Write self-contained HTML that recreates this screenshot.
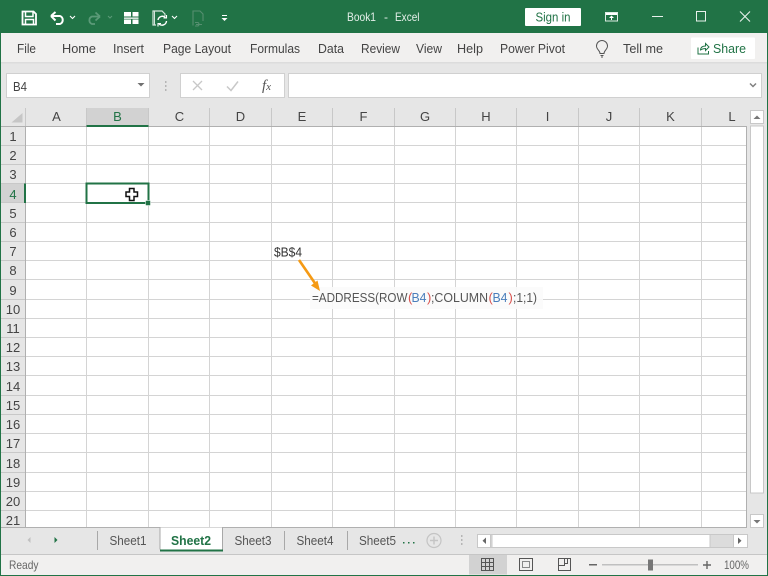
<!DOCTYPE html>
<html><head><meta charset="utf-8"><style>
html,body{margin:0;padding:0;width:768px;height:576px;overflow:hidden;background:#e6e6e6}
svg{display:block;position:absolute;left:0;top:0;filter:blur(0.35px)}
text{font-family:"Liberation Sans",sans-serif;font-size:12.5px;fill:#444}
.h text{font-size:13px}
</style></head><body>
<svg width="768" height="576" viewBox="0 0 768 576" xmlns="http://www.w3.org/2000/svg">
<rect width="768" height="576" fill="#e6e6e6"/>
<!-- title bar -->
<rect width="768" height="33" fill="#217346"/>
<!-- QAT -->
<g fill="none" stroke="#fff" stroke-width="1.800">
<path d="M22.500 11.500h11l2.500 2.500v10.500h-13.500z"/><path d="M25.500 12v4.500h7.500v-4.500M25.500 24.500v-5h8v5" stroke-width="1.500"/>
<path d="M52 16h8a4.300 4.300 0 0 1 0 8h-4" stroke-width="2"/><path d="M51 16l4.500-4M51 16l4.500 4.500" stroke-width="2"/>
<path d="M70 16l2.500 2.500 2.500-2.500" stroke-width="1.100"/>
<path d="M172 16l2.500 2.500 2.500-2.500" stroke-width="1.100"/>
</g>
<g fill="none" stroke="#5b9a78" stroke-width="1.800"><path d="M99 16.500h-7a4 4 0 0 0 0 7.500h3"/><path d="M100 16.500l-4.500-4M100 16.500l-4.500 4"/><path d="M108 16l2 2 2-2" stroke-width="1"/></g>
<g fill="#fff"><rect x="124" y="12" width="7" height="4.500"/><rect x="132.500" y="12" width="6" height="4.500"/><rect x="124" y="17.500" width="14.500" height="1.300"/><rect x="124" y="19.500" width="7" height="4.500"/><rect x="132.500" y="19.500" width="6" height="4.500"/></g>
<g fill="none" stroke="#d5e5dc" stroke-width="1.200"><path d="M156 25h-3v-14h9l3 3v2"/><path d="M154.500 11v14" stroke-width="1"/></g>
<g fill="none" stroke="#fff" stroke-width="1.400"><path d="M158 20a4.500 4.500 0 0 1 7.500-2.500M166.500 21a4.500 4.500 0 0 1-7.500 3"/><path d="M166.500 15v3h-3M158 26.500v-3h3" stroke-width="1.100"/></g>
<g fill="none" stroke="#568f70" stroke-width="1.100"><path d="M193 25.500v-14.500h7l3 3v7"/><path d="M196 24.500h6M195 22.500h3a2 2 0 0 1 0 3.500h-3"/></g>
<g fill="#fff"><rect x="222" y="15" width="5" height="1"/><path d="M221.500 18h6l-3 3z"/></g>
<text x="347" y="21" textLength="29" lengthAdjust="spacingAndGlyphs" style="fill:#e4efe9;font-size:12px">Book1</text>
<text x="384" y="21" style="fill:#e4efe9;font-size:12px">-</text>
<text x="395" y="21" textLength="24.500" lengthAdjust="spacingAndGlyphs" style="fill:#e4efe9;font-size:12px">Excel</text>
<rect x="525" y="8" width="56" height="18" rx="1" fill="#fff"/>
<text x="535.500" y="21.500" textLength="35" lengthAdjust="spacingAndGlyphs" style="fill:#217346;font-size:13px">Sign in</text>
<g fill="none" stroke="#fff"><rect x="605.500" y="12.500" width="12" height="8.500" stroke="#dcebe3"/><rect x="606" y="13" width="11" height="2" fill="#fff" stroke="none"/><path d="M611.500 15.500l-2.500 2.500h5z" fill="#fff" stroke="none"/><path d="M611.500 17v3"/></g>
<rect x="652" y="16" width="11" height="1" fill="#e8f1ec"/>
<rect x="696.500" y="11.500" width="9" height="9.500" fill="none" stroke="#e8f1ec"/>
<path d="M740 11.500l10 10M750 11.500l-10 10" stroke="#e8f1ec" stroke-width="1.100" fill="none"/>
<!-- ribbon tabs -->
<rect x="0" y="33" width="768" height="30" fill="#f1f0ef"/>
<rect x="0" y="62" width="768" height="1.500" fill="#dcdcdc"/>
<text x="17" y="53" textLength="19" lengthAdjust="spacingAndGlyphs">File</text>
<text x="62" y="53" textLength="34" lengthAdjust="spacingAndGlyphs">Home</text>
<text x="113" y="53" textLength="31" lengthAdjust="spacingAndGlyphs">Insert</text>
<text x="163" y="53" textLength="68" lengthAdjust="spacingAndGlyphs">Page Layout</text>
<text x="250" y="53" textLength="50" lengthAdjust="spacingAndGlyphs">Formulas</text>
<text x="318" y="53" textLength="26" lengthAdjust="spacingAndGlyphs">Data</text>
<text x="361" y="53" textLength="39" lengthAdjust="spacingAndGlyphs">Review</text>
<text x="416" y="53" textLength="26" lengthAdjust="spacingAndGlyphs">View</text>
<text x="457" y="53" textLength="26" lengthAdjust="spacingAndGlyphs">Help</text>
<text x="500" y="53" textLength="65" lengthAdjust="spacingAndGlyphs">Power Pivot</text>
<path d="M600 53.500c0-3-3.500-4-3.500-7.500a5.500 5.500 0 0 1 11 0c0 3.500-3.500 4.500-3.500 7.500zM600.500 55.500h3M601 57h2" fill="none" stroke="#555" stroke-width="1"/>
<text x="623" y="53" textLength="40" lengthAdjust="spacingAndGlyphs">Tell me</text>
<rect x="691" y="37.500" width="64" height="21.500" rx="1" fill="#fff"/>
<path d="M698 47.500v6.500h10.500v-3M700.500 50.500c0-3 2-4.500 5-4.500v-2.500l3.500 3.500-3.500 3.500v-2c-2 0-3.500.5-5 1.500z" fill="none" stroke="#217346" stroke-width="1"/>
<text x="713" y="53" textLength="33" lengthAdjust="spacingAndGlyphs" style="fill:#217346;font-size:13px">Share</text>
<!-- formula bar -->
<rect x="6.500" y="73.500" width="143" height="24" fill="#fff" stroke="#d0d0d0"/>
<text x="13" y="91" textLength="14" lengthAdjust="spacingAndGlyphs">B4</text>
<path d="M137.500 83h7l-3.500 3.500z" fill="#707070"/>
<g fill="#b5b5b5"><rect x="165" y="81" width="1.500" height="2"/><rect x="165" y="85" width="1.500" height="2"/><rect x="165" y="89" width="1.500" height="2"/></g>
<rect x="180.500" y="73.500" width="104" height="24" fill="#fff" stroke="#d0d0d0"/>
<path d="M193 81l9 9M202 81l-9 9" stroke="#c8c8c8" stroke-width="1.300" fill="none"/>
<path d="M227 86.500l4 4 7-9" stroke="#c8c8c8" stroke-width="1.500" fill="none"/>
<text x="262" y="90" style="font-family:'Liberation Serif',serif;font-style:italic;font-size:15px;fill:#555">f<tspan style="font-size:11px">x</tspan></text>
<rect x="288.500" y="73.500" width="473" height="24" fill="#fff" stroke="#d0d0d0"/>
<path d="M750 83.500l3 3 3-3" fill="none" stroke="#808080" stroke-width="1.500"/>
<!-- grid -->
<rect x="0" y="108" width="768" height="420" fill="#e6e6e6"/>
<rect x="25" y="126" width="722" height="401" fill="#fff"/>
<rect x="86.500" y="108" width="62" height="17" fill="#d2d2d2"/>
<rect x="1" y="183.500" width="24" height="19.500" fill="#d2d2d2"/>
<path d="M22.500 113v9.500h-11z" fill="#c6c6c6"/>
<g stroke="#c8c8c8" stroke-width="1" fill="none">
<path d="M25.500 108v18M86.500 108v18M148.500 108v18M209.500 108v18M271.500 108v18M332.500 108v18M394.500 108v18M455.500 108v18M516.500 108v18M578.500 108v18M639.500 108v18M701.500 108v18"/>
<path d="M0 145.500h25M0 164.500h25M0 183.500h25M0 202.500h25M0 222.500h25M0 241.500h25M0 260.500h25M0 279.500h25M0 299.500h25M0 318.500h25M0 337.500h25M0 356.500h25M0 375.500h25M0 395.500h25M0 414.500h25M0 433.500h25M0 452.500h25M0 472.500h25M0 491.500h25M0 510.500h25"/>
</g>
<g stroke="#d4d4d4" stroke-width="1" fill="none">
<path d="M86.500 126v401M148.500 126v401M209.500 126v401M271.500 126v401M332.500 126v401M394.500 126v401M455.500 126v401M516.500 126v401M578.500 126v401M639.500 126v401M701.500 126v401"/>
<path d="M25 145.500h722M25 164.500h722M25 183.500h722M25 202.500h722M25 222.500h722M25 241.500h722M25 260.500h722M25 279.500h722M25 299.500h722M25 318.500h722M25 337.500h722M25 356.500h722M25 375.500h722M25 395.500h722M25 414.500h722M25 433.500h722M25 452.500h722M25 472.500h722M25 491.500h722M25 510.500h722"/>
</g>
<path d="M0 126.500h747M25.500 126v401M746.500 126v401M0 527.500h747" stroke="#b0b0b0" fill="none"/>
<rect x="86.500" y="125" width="62" height="2" fill="#217346"/>
<rect x="24" y="183.500" width="2" height="19.500" fill="#217346"/>
<g text-anchor="middle" class="h">
<text x="56.500" y="121">A</text><text x="117.500" y="121" style="fill:#217346">B</text><text x="179.500" y="121">C</text><text x="240.500" y="121">D</text><text x="302" y="121">E</text><text x="363.500" y="121">F</text><text x="425" y="121">G</text><text x="486" y="121">H</text><text x="547.500" y="121">I</text><text x="609" y="121">J</text><text x="670.500" y="121">K</text><text x="732" y="121">L</text>
<text x="13" y="141">1</text><text x="13" y="160">2</text><text x="13" y="179">3</text><text x="13" y="199" style="fill:#217346">4</text><text x="13" y="218">5</text><text x="13" y="237">6</text><text x="13" y="256">7</text><text x="13" y="275">8</text><text x="13" y="295">9</text>
<text x="13" y="314">10</text><text x="13" y="333">11</text><text x="13" y="352">12</text><text x="13" y="371">13</text><text x="13" y="391">14</text><text x="13" y="410">15</text><text x="13" y="429">16</text><text x="13" y="448">17</text><text x="13" y="468">18</text><text x="13" y="487">19</text><text x="13" y="506">20</text><text x="13" y="525">21</text>
</g>
<!-- selection -->
<rect x="86.500" y="183.500" width="62" height="19.500" fill="#fff" stroke="#217346" stroke-width="2"/>
<rect x="145.500" y="200.500" width="5" height="5" fill="#217346" stroke="#fff" stroke-width="0.500"/>
<path d="M129.500 188.500h4.500v3.500h3.500v4.500h-3.500v4h-4.500v-4h-3.500v-4.500h3.500z" fill="#fff" stroke="#111" stroke-width="1.500"/>
<!-- annotation -->
<rect x="310" y="287" width="233" height="22" fill="#fbfbfb" fill-opacity="0.9"/>
<text x="274" y="256.500" textLength="28" lengthAdjust="spacingAndGlyphs" style="fill:#333;font-size:13px">$B$4</text>
<path d="M299 260l16.500 24" stroke="#f59a14" stroke-width="2.600" fill="none"/>
<path d="M320 291l-9-5.500 6.500-5z" fill="#f59a14"/>
<g style="font-size:13px">
<text x="312" y="302" textLength="95.500" lengthAdjust="spacingAndGlyphs" style="fill:#555;font-size:13px">=ADDRESS(ROW</text>
<text x="408" y="302" style="fill:#d9534f;font-size:13px">(</text>
<text x="411.500" y="302" textLength="15" lengthAdjust="spacingAndGlyphs" style="fill:#4a7ebb;font-size:13px">B4</text>
<text x="427" y="302" style="fill:#d9534f;font-size:13px">)</text>
<text x="431" y="302" textLength="57" lengthAdjust="spacingAndGlyphs" style="fill:#555;font-size:13px">;COLUMN</text>
<text x="488.500" y="302" style="fill:#d9534f;font-size:13px">(</text>
<text x="492.500" y="302" textLength="15" lengthAdjust="spacingAndGlyphs" style="fill:#4a7ebb;font-size:13px">B4</text>
<text x="508.500" y="302" style="fill:#d9534f;font-size:13px">)</text>
<text x="513" y="302" textLength="24" lengthAdjust="spacingAndGlyphs" style="fill:#555;font-size:13px">;1;1)</text>
</g>
<!-- v scrollbar -->
<rect x="750.500" y="110.500" width="13" height="13" fill="#fff" stroke="#c8c8c8"/>
<path d="M753.500 119l3.500-3.500 3.500 3.500z" fill="#777"/>
<rect x="750.500" y="126" width="13" height="367" fill="#fff" stroke="#c8c8c8"/>
<rect x="750.500" y="514.500" width="13" height="13" fill="#fff" stroke="#c8c8c8"/>
<path d="M753.500 520h7l-3.500 3.500z" fill="#777"/>
<!-- sheet tabs -->
<rect x="0" y="528" width="768" height="26" fill="#e6e6e6"/>
<path d="M0 554.500h768" stroke="#c6c6c6"/>
<path d="M30.500 537v6l-3-3z" fill="#c0c0c0"/>
<path d="M54.500 537v6l3-3z" fill="#217346"/>
<path d="M97.500 531v19M284.500 531v19M347.500 531v19" stroke="#a8a8a8"/>
<path d="M160 527.500h62.500v23h-62.500z" fill="#fff"/>
<path d="M160 527.500v22M222.500 527.500v22" stroke="#a8a8a8"/>
<rect x="160" y="549.500" width="63" height="2" fill="#217346"/>
<text x="109.500" y="545" textLength="37" lengthAdjust="spacingAndGlyphs" style="fill:#555;font-size:13px">Sheet1</text>
<text x="171" y="545" textLength="40" lengthAdjust="spacingAndGlyphs" style="fill:#217346;font-weight:bold;font-size:13px">Sheet2</text>
<text x="234.500" y="545" textLength="37" lengthAdjust="spacingAndGlyphs" style="fill:#555;font-size:13px">Sheet3</text>
<text x="296.500" y="545" textLength="37" lengthAdjust="spacingAndGlyphs" style="fill:#555;font-size:13px">Sheet4</text>
<text x="359" y="545" textLength="37" lengthAdjust="spacingAndGlyphs" style="fill:#555;font-size:13px">Sheet5</text>
<g fill="#217346"><rect x="403" y="542" width="1.500" height="1.500"/><rect x="408" y="542" width="1.500" height="1.500"/><rect x="413" y="542" width="1.500" height="1.500"/></g>
<circle cx="434" cy="540.500" r="7" fill="none" stroke="#c4c4c4" stroke-width="1.200"/>
<path d="M430 540.500h8M434 536.500v8" stroke="#c4c4c4" stroke-width="1.400"/>
<g fill="#b5b5b5"><rect x="461" y="535" width="1.500" height="2"/><rect x="461" y="539" width="1.500" height="2"/><rect x="461" y="543" width="1.500" height="2"/></g>
<rect x="477.500" y="534.500" width="270" height="13" fill="#dcdcdc" stroke="#c8c8c8"/>
<rect x="477.500" y="534.500" width="13" height="13" fill="#fff" stroke="#c8c8c8"/>
<path d="M486 537.500v6.500l-3.500-3.200z" fill="#666"/>
<rect x="492" y="534.500" width="218" height="13" fill="#fff" stroke="#c8c8c8"/>
<rect x="733.500" y="534.500" width="14" height="13" fill="#fff" stroke="#c8c8c8"/>
<path d="M738 537.500v6.500l3.500-3.200z" fill="#666"/>
<!-- status -->
<rect x="0" y="555" width="768" height="21" fill="#f1f0ef"/>
<text x="9" y="569" textLength="29.500" lengthAdjust="spacingAndGlyphs" style="fill:#666;font-size:12px">Ready</text>
<rect x="469" y="555" width="38" height="19.500" fill="#d2d2d2"/>
<g fill="none" stroke="#555"><rect x="481.500" y="558.500" width="12" height="12"/><path d="M485.500 558.500v12M489.500 558.500v12M481.500 562.500h12M481.500 566.500h12"/>
<rect x="519.500" y="558.500" width="13" height="12"/><rect x="522.500" y="561.500" width="7" height="6" stroke="#888"/>
<path d="M558.500 558.500h12v12h-12zM558.500 565.500h6v-7M564.500 563.500h3v-5"/></g>
<rect x="589" y="564" width="8" height="1.500" fill="#666"/>
<rect x="602" y="564" width="96" height="1.500" fill="#c0c0c0"/>
<rect x="648" y="559.500" width="5" height="11" fill="#777"/>
<path d="M703 565h8M707 561v8" stroke="#666" stroke-width="1.400"/>
<text x="724" y="569" textLength="25" lengthAdjust="spacingAndGlyphs" style="fill:#666;font-size:12px">100%</text>
<!-- window border -->
<path d="M.5 33v543M767.500 33v543M0 575.500h768" stroke="#217346" fill="none"/>
</svg>
</body></html>
